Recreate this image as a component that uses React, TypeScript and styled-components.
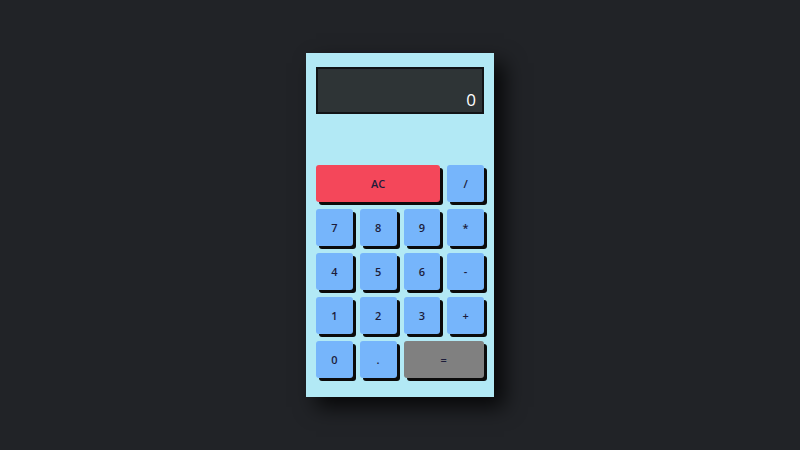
import { FC, useState } from "react";
import styled, { createGlobalStyle } from "styled-components";

type keyKind = "num" | "clear" | "equal";

type keyType = {
    label: string;
    kind: keyKind;
    span?: number;
}

const KEYS: keyType[] = [
    { label: "AC", kind: "clear", span: 3 },
    { label: "/", kind: "num" },
    { label: "7", kind: "num" },
    { label: "8", kind: "num" },
    { label: "9", kind: "num" },
    { label: "*", kind: "num" },
    { label: "4", kind: "num" },
    { label: "5", kind: "num" },
    { label: "6", kind: "num" },
    { label: "-", kind: "num" },
    { label: "1", kind: "num" },
    { label: "2", kind: "num" },
    { label: "3", kind: "num" },
    { label: "+", kind: "num" },
    { label: "0", kind: "num" },
    { label: ".", kind: "num" },
    { label: "=", kind: "equal", span: 2 },
];

const App: FC = () => {
    const [value, setValue] = useState<string>("0");

    const press = (label: string) => {
        if (label === "AC") return setValue("0");
        if (label === "=") {
            try {
                // 入力は KEYS の記号だけなので Function で評価
                const result = Function(`"use strict"; return (${value})`)();
                setValue(String(result));
            } catch {
                setValue("0");
            }
            return;
        }
        setValue(value === "0" && label !== "." ? label : value + label);
    }

    return (
        <>
            <GlobalStyle />
            <Page>
                <Calculator>
                    <Display>{value}</Display>
                    <Keypad>
                        {KEYS.map((key) => (
                            <Key key={key.label} $kind={key.kind} $span={key.span ?? 1} onClick={() => press(key.label)}>
                                {key.label}
                            </Key>
                        ))}
                    </Keypad>
                </Calculator>
            </Page>
        </>
    );
}

export default App;

const GlobalStyle = createGlobalStyle`
    html, body {
        margin: 0;
        padding: 0;
        background-color: #212327;
        font-family: "Open Sans", "Noto Sans", sans-serif;
    }
`;

const Page = styled.main`
    width: 800px;
    height: 450px;
    display: flex;
    justify-content: center;
    align-items: flex-start;
    padding-top: 53px;
    box-sizing: border-box;
`;

const Calculator = styled.div`
    width: 188px;
    height: 344px;
    box-sizing: border-box;
    padding: 14px 10px 0;
    background-color: #b2e9f5;
    box-shadow: 10px 10px 20px rgba(0, 0, 0, .8);
    display: flex;
    flex-direction: column;
    gap: 51px;
`;

const Display = styled.div`
    height: 47px;
    box-sizing: border-box;
    border: 2px solid #121416;
    background-color: #2e3436;
    color: #ffffff;
    font-size: 17px;
    display: flex;
    align-items: flex-end;
    justify-content: flex-end;
    padding: 0 6px 1px;
`;

const Keypad = styled.div`
    display: grid;
    grid-template-columns: repeat(4, 1fr);
    grid-auto-rows: 37px;
    column-gap: 7px;
    row-gap: 7px;
`;

const keyColor: Record<keyKind, string> = {
    num: "#76b5fb",
    clear: "#f4475a",
    equal: "#808080",
};

const Key = styled.button<{ $kind: keyKind; $span: number }>`
    grid-column: span ${({ $span }) => $span};
    border: none;
    border-radius: 3px;
    background-color: ${({ $kind }) => keyColor[$kind]};
    box-shadow: 3px 3px 0 #0b0b0b;
    color: #1c1c3a;
    font-family: inherit;
    font-size: 11px;
    font-weight: 600;
    cursor: pointer;
    padding: 0;

    &:active {
        box-shadow: 1px 1px 0 #0b0b0b;
    }
`;
